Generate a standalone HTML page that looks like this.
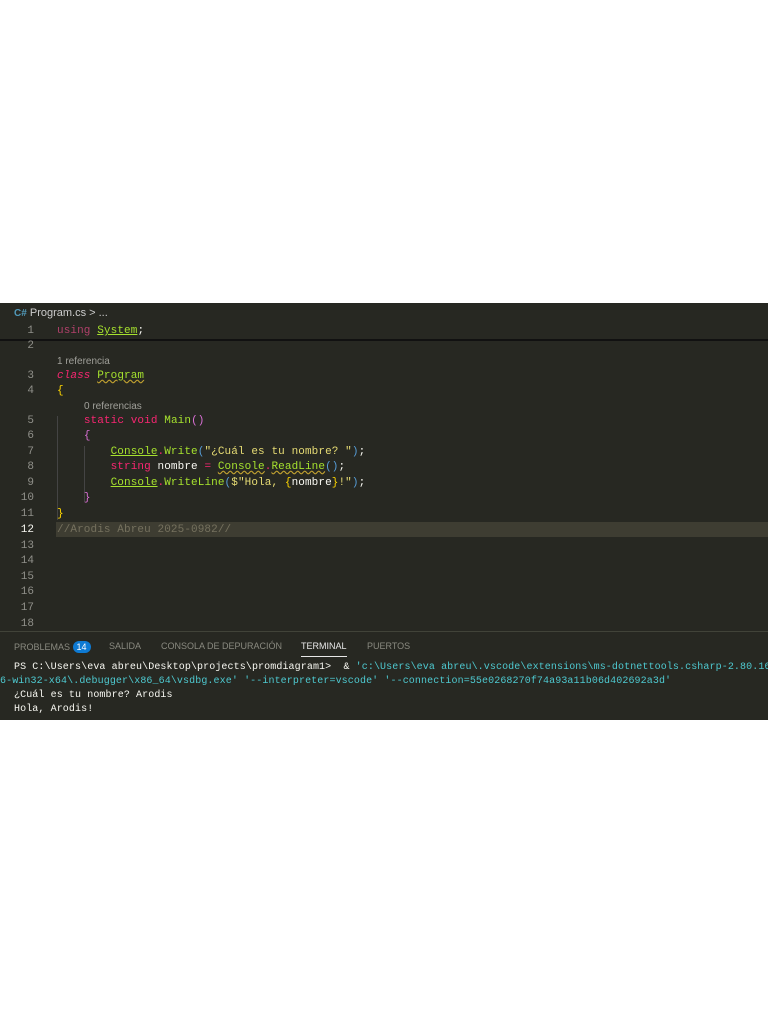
<!DOCTYPE html>
<html><head><meta charset="utf-8"><style>
html,body{margin:0;padding:0;width:768px;height:1024px;background:#fff;overflow:hidden}
#ed{position:absolute;left:0;top:303px;width:768px;height:417px;background:#272822;font-family:"Liberation Mono",monospace}
.ln{position:absolute;left:0;width:34px;text-align:right;font-size:11px;color:#90908a;line-height:15px}
.code{position:absolute;left:57px;font-size:11px;line-height:15px;white-space:pre;color:#f8f8f2;letter-spacing:0.1px}
.ref{position:absolute;font-family:"Liberation Sans",sans-serif;font-size:10px;color:#a0a09a;line-height:12px}
.k{color:#f92672}.g{color:#a6e22e}.y{color:#e6db74}.c{color:#75715e}.b{color:#569cd6}.p{color:#da70d6}.br{color:#ffd700}
.u{text-decoration:underline;text-decoration-color:#a6e22e}
.w{text-decoration:underline wavy #c0a030}
.term{position:absolute;left:14px;font-size:10px;line-height:14px;white-space:pre;color:#f8f8f2;letter-spacing:0.1px}
.tab{position:absolute;top:338px;font-family:"Liberation Sans",sans-serif;font-size:9px;color:#8a8a80}
</style></head><body>
<div id="ed">
<div style="position:absolute;left:14px;top:4px;font-family:'Liberation Sans',sans-serif;font-size:11px;color:#ccc"><span style="color:#519aba;font-weight:bold;font-size:10px">C#</span> Program.cs &gt; ...</div>
<div style="position:absolute;left:0;top:36px;width:768px;height:2px;background:#111"></div>
<div style="position:absolute;left:56px;top:219px;width:712px;height:15px;background:#3e3d32"></div>
<div style="position:absolute;left:57px;top:113px;width:1px;height:104px;background:#444"></div>
<div style="position:absolute;left:84px;top:143px;width:1px;height:56px;background:#444"></div>

<div class="ln" style="top:21px">1</div><div class="code" style="top:21px"><span style="color:#b0406a">using</span> <span class="g u">System</span>;</div>
<div class="ln" style="top:36px">2</div>
<div class="ref" style="left:57px;top:53px">1 referencia</div>
<div class="ln" style="top:66px">3</div><div class="code" style="top:66px"><span class="k" style="font-style:italic">class</span> <span class="g w">Program</span></div>
<div class="ln" style="top:81px">4</div><div class="code br" style="top:81px">{</div>
<div class="ref" style="left:84px;top:98px">0 referencias</div>
<div class="ln" style="top:111px">5</div><div class="code" style="top:111px">    <span class="k">static</span> <span class="k">void</span> <span class="g">Main</span><span class="p">()</span></div>
<div class="ln" style="top:126px">6</div><div class="code" style="top:126px">    <span class="p">{</span></div>
<div class="ln" style="top:142px">7</div><div class="code" style="top:142px">        <span class="g u">Console</span><span class="k">.</span><span class="g">Write</span><span class="b">(</span><span class="y">"¿Cuál es tu nombre? "</span><span class="b">)</span>;</div>
<div class="ln" style="top:157px">8</div><div class="code" style="top:157px">        <span class="k">string</span> nombre <span class="k">=</span> <span class="g w">Console</span><span class="k">.</span><span class="g w">ReadLine</span><span class="b">()</span>;</div>
<div class="ln" style="top:173px">9</div><div class="code" style="top:173px">        <span class="g u">Console</span><span class="k">.</span><span class="g">WriteLine</span><span class="b">(</span><span class="y">$"Hola, </span><span class="br">{</span>nombre<span class="br">}</span><span class="y">!"</span><span class="b">)</span>;</div>
<div class="ln" style="top:188px">10</div><div class="code" style="top:188px">    <span class="p">}</span></div>
<div class="ln" style="top:204px">11</div><div class="code br" style="top:204px">}</div>
<div class="ln" style="top:220px;color:#f8f8f2">12</div><div class="code c" style="top:220px">//Arodis Abreu 2025-0982//</div>
<div class="ln" style="top:236px">13</div>
<div class="ln" style="top:251px">14</div>
<div class="ln" style="top:267px">15</div>
<div class="ln" style="top:282px">16</div>
<div class="ln" style="top:298px">17</div>
<div class="ln" style="top:314px">18</div>

<div style="position:absolute;left:0;top:328px;width:768px;height:1px;background:#414339"></div>
<div class="tab" style="left:14px">PROBLEMAS <span style="display:inline-block;background:#0e7ad3;color:#fff;border-radius:7px;padding:0 4px;font-size:9px;line-height:12px">14</span></div>
<div class="tab" style="left:109px">SALIDA</div>
<div class="tab" style="left:161px">CONSOLA DE DEPURACIÓN</div>
<div class="tab" style="left:301px;color:#e8e8e8">TERMINAL</div>
<div style="position:absolute;left:301px;top:353px;width:46px;height:1px;background:#e8e8e8"></div>
<div class="tab" style="left:367px">PUERTOS</div>

<div class="term" style="top:358px">PS C:\Users\eva abreu\Desktop\projects\promdiagram1>  &amp; <span style="color:#4ec9d0">'c:\Users\eva abreu\.vscode\extensions\ms-dotnettools.csharp-2.80.16</span></div>
<div class="term" style="top:372px;left:0"><span style="color:#4ec9d0">6-win32-x64\.debugger\x86_64\vsdbg.exe'</span> <span style="color:#4ec9d0">'--interpreter=vscode'</span> <span style="color:#4ec9d0">'--connection=55e0268270f74a93a11b06d402692a3d'</span></div>
<div class="term" style="top:386px;left:14px">¿Cuál es tu nombre? Arodis</div>
<div class="term" style="top:400px;left:14px">Hola, Arodis!</div>
</div>
</body></html>
